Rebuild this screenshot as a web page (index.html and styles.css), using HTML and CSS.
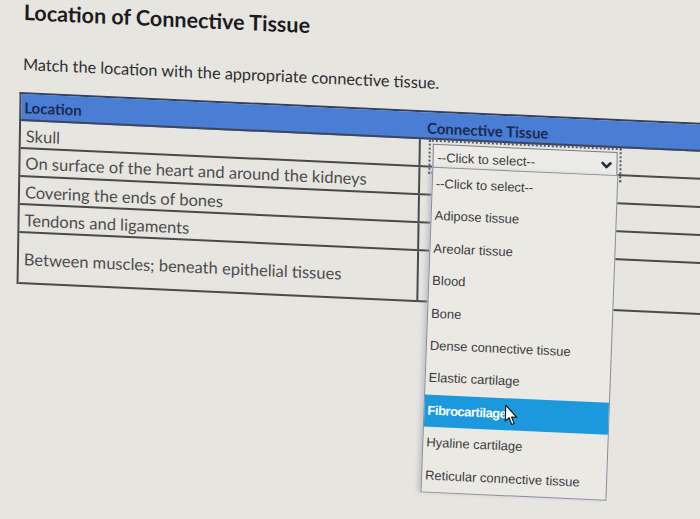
FILE: index.html
```html
<!DOCTYPE html>
<html lang="en">
<head>
<meta charset="utf-8">
<title>Location of Connective Tissue</title>
<link rel="stylesheet" href="styles.css">
</head>
<body>
<div class="page">
  <h1 class="title">Location of Connective Tissue</h1>
  <p class="prompt">Match the location with the appropriate connective tissue.</p>

  <div class="matcher">
    <div class="row row-head">
      <div class="cell cell-loc">Location</div>
      <div class="cell cell-tis">Connective Tissue</div>
    </div>
    <div class="row row-1">
      <div class="cell cell-loc">Skull</div>
      <div class="cell cell-tis">
        <div class="select">
          <span>--Click to select--</span>
          <svg class="chevron" width="12" height="9" viewBox="0 0 12 9"><path d="M2 2.5 L6 6.5 L10 2.5" fill="none" stroke="#1e2b4a" stroke-width="2.6" stroke-linecap="round" stroke-linejoin="round"/></svg>
        </div>
      </div>
    </div>
    <div class="row row-2">
      <div class="cell cell-loc">On surface of the heart and around the kidneys</div>
      <div class="cell cell-tis"></div>
    </div>
    <div class="row row-3">
      <div class="cell cell-loc">Covering the ends of bones</div>
      <div class="cell cell-tis"></div>
    </div>
    <div class="row row-4">
      <div class="cell cell-loc">Tendons and ligaments</div>
      <div class="cell cell-tis"></div>
    </div>
    <div class="row row-5">
      <div class="cell cell-loc">Between muscles; beneath epithelial tissues</div>
      <div class="cell cell-tis"></div>
    </div>

    <ul class="options">
      <li class="option">--Click to select--</li>
      <li class="option">Adipose tissue</li>
      <li class="option">Areolar tissue</li>
      <li class="option">Blood</li>
      <li class="option">Bone</li>
      <li class="option">Dense connective tissue</li>
      <li class="option">Elastic cartilage</li>
      <li class="option option-active">Fibrocartilage
        <svg class="pointer" width="14" height="22" viewBox="0 0 14 22"><path d="M1 1 L1 17 L4.8 13.4 L7.6 20 L10 19 L7.3 12.6 L12.4 12.6 Z" fill="#fff" stroke="#111" stroke-width="1.1" stroke-linejoin="round"/></svg>
      </li>
      <li class="option">Hyaline cartilage</li>
      <li class="option">Reticular connective tissue</li>
    </ul>
  </div>
</div>
</body>
</html>
```

FILE: styles.css
```css
html, body {
  margin: 0;
  padding: 0;
}

body {
  width: 700px;
  height: 519px;
  overflow: hidden;
  background: #e7e5e0;
  font-family: "Lato", "Liberation Sans", sans-serif;
}

/* the screen is seen slightly from an angle */
.page {
  width: 780px;
  padding-left: 21px;
  transform-origin: 0 0;
  transform: rotate(0.9deg) skewY(1.7deg);
}

.title {
  margin: 0;
  padding: 0 0 0 3px;
  font-size: 21.5px;
  line-height: 22px;
  font-weight: 700;
  color: #1b1b20;
}

.prompt {
  margin: 31px 0 0;
  padding-left: 3px;
  font-size: 16.3px;
  line-height: 19px;
  color: #2e2e30;
}

.matcher {
  position: relative;
  width: 760px;
  margin-top: 19px;
  border-top: 2px solid #34405a;
  border-left: 2px solid #4a4a4c;
}

.row {
  display: grid;
  grid-template-columns: 400px 1fr;
  border-bottom: 2px solid #4a4a4c;
  box-sizing: border-box;
}

.cell {
  display: flex;
  align-items: center;
  font-size: 16.5px;
  color: #4c4c4e;
  white-space: nowrap;
}

.cell-loc {
  padding-left: 5px;
  border-right: 2px solid #4a4a4c;
}

.cell-tis {
  position: relative;
  padding-left: 6px;
}

.row-head {
  height: 27px;
  background: #4a7dd4;
  border-bottom-color: #3c4660;
}

.row-head .cell {
  font-size: 15px;
  font-weight: 700;
  color: #1b2a52;
}

.row-head .cell-loc {
  padding-left: 3px;
  border-right: 0;
}

.row-head .cell-tis {
  padding-top: 4px;
  padding-left: 6px;
}

.row-1 { height: 28px; }
.row-2 { height: 28px; }
.row-3 { height: 28px; }
.row-4 { height: 28px; }
.row-5 { height: 51px; }

.row-1 .cell { padding-top: 3px; }
.row-2 .cell { padding-top: 2px; }
.row-3 .cell { padding-top: 3px; }
.row-4 .cell { padding-top: 3px; }
.row-5 .cell { padding-top: 2px; }

.row-1 .cell-tis {
  align-items: flex-start;
  padding-top: 0;
}

.select {
  position: absolute;
  left: 12px;
  top: 4px;
  width: 185px;
  height: 26px;
  box-sizing: border-box;
  display: flex;
  align-items: center;
  justify-content: space-between;
  padding: 0 4px 0 4px;
  background: #ecebe7;
  border: 1px solid #7c7c84;
  outline: 2px dotted #55596a;
  outline-offset: 2px;
  font-family: "Liberation Sans", Arial, sans-serif;
  font-size: 13px;
  color: #3a3a3c;
  z-index: 2;
}

.chevron {
  display: block;
}

/* open list of the select, leaning a little further with the screen */
.options {
  position: absolute;
  left: 412px;
  top: 54px;
  width: 184px;
  margin: 0;
  padding: 0;
  list-style: none;
  background: #eae9e4;
  border: 1px solid #8a8c98;
  box-shadow: -4px 0 4px -1px rgba(150, 158, 185, 0.45);
  font-family: "Liberation Sans", Arial, sans-serif;
  font-size: 13px;
  color: #3a3a3c;
  z-index: 3;
  transform-origin: 0 0;
  transform: skewX(-1.2deg);
}

.option {
  position: relative;
  height: 32.4px;
  line-height: 32px;
  padding-left: 3px;
  white-space: nowrap;
}

.option-active {
  background: #1c98dd;
  color: #ffffff;
  font-weight: 700;
  letter-spacing: -0.5px;
}

.pointer {
  position: absolute;
  left: 80px;
  top: 6px;
}
```
